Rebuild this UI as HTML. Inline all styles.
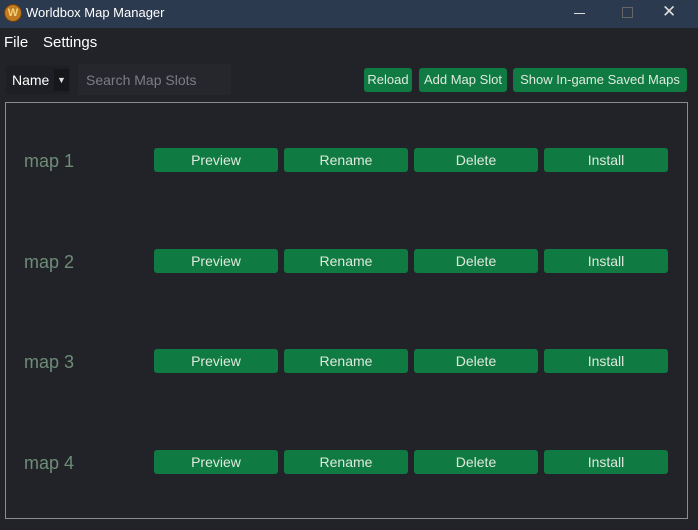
<!DOCTYPE html><html><head><style>
body{margin:0;width:698px;height:530px;background:#212328;font-family:"Liberation Sans",sans-serif;position:relative;overflow:hidden;color:#fff}
.a{position:absolute}
.tb{left:0;top:0;width:698px;height:28px;background:#2b3a4f}
.btn{position:absolute;background:#0f7a41;color:#dfe9dd;border-radius:3px;font-size:14px;text-align:center;line-height:24px;height:24px;white-space:nowrap}
.rb{width:124px}
.lbl{position:absolute;left:24px;color:#6f8c78;font-size:18px}
</style></head><body>
<div class="a tb"></div>
<div class="a" style="left:4px;top:4px;width:18px;height:18px;border-radius:50%;background:#c07a20;border:1px solid #6a3d10;box-sizing:border-box;font-size:11px;font-weight:bold;color:#f4d27a;text-align:center;line-height:16px">W</div>
<div class="a" style="left:26px;top:5px;font-size:13px;color:#fff">Worldbox Map Manager</div>
<div class="a" style="left:574px;top:13px;width:11px;height:1px;background:#ddd"></div>
<div class="a" style="left:622px;top:7px;width:9px;height:9px;border:1px solid #666"></div>
<div class="a" style="left:662px;top:2px;font-size:17px;color:#ddd">✕</div>
<div class="a" style="left:4px;top:34px;font-size:15px">File</div>
<div class="a" style="left:43px;top:34px;font-size:15px">Settings</div>
<div class="a" style="left:6px;top:66px;width:64px;height:28px;background:#1d1f24"></div>
<div class="a" style="left:12px;top:72px;font-size:14px">Name</div>
<div class="a" style="left:54px;top:69px;width:15px;height:22px;background:#16171b;color:#ddd;font-size:9px;text-align:center;line-height:22px">▼</div>
<div class="a" style="left:78px;top:64px;width:153px;height:31px;background:#25272d"></div>
<div class="a" style="left:86px;top:72px;font-size:14px;color:#7b7e84">Search Map Slots</div>
<div class="btn" style="left:364px;top:68px;width:48px;font-size:13px">Reload</div>
<div class="btn" style="left:419px;top:68px;width:88px;font-size:13px">Add Map Slot</div>
<div class="btn" style="left:513px;top:68px;width:174px;font-size:13px">Show In-game Saved Maps</div>
<div class="a" style="left:5px;top:102px;width:681px;height:415px;border:1px solid #8a8c90"></div>
<div class="lbl" style="top:151px">map 1</div>
<div class="btn rb" style="left:154px;top:148px">Preview</div><div class="btn rb" style="left:284px;top:148px">Rename</div><div class="btn rb" style="left:414px;top:148px">Delete</div><div class="btn rb" style="left:544px;top:148px">Install</div>
<div class="lbl" style="top:252px">map 2</div>
<div class="btn rb" style="left:154px;top:249px">Preview</div><div class="btn rb" style="left:284px;top:249px">Rename</div><div class="btn rb" style="left:414px;top:249px">Delete</div><div class="btn rb" style="left:544px;top:249px">Install</div>
<div class="lbl" style="top:352px">map 3</div>
<div class="btn rb" style="left:154px;top:349px">Preview</div><div class="btn rb" style="left:284px;top:349px">Rename</div><div class="btn rb" style="left:414px;top:349px">Delete</div><div class="btn rb" style="left:544px;top:349px">Install</div>
<div class="lbl" style="top:453px">map 4</div>
<div class="btn rb" style="left:154px;top:450px">Preview</div><div class="btn rb" style="left:284px;top:450px">Rename</div><div class="btn rb" style="left:414px;top:450px">Delete</div><div class="btn rb" style="left:544px;top:450px">Install</div>
</body></html>
